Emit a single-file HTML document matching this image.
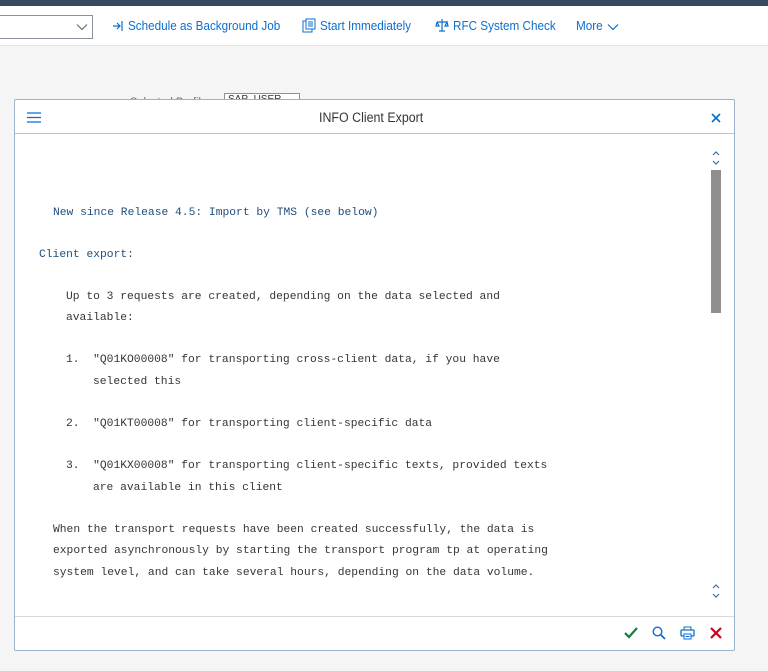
<!DOCTYPE html>
<html><head><meta charset="utf-8"><style>
*{margin:0;padding:0;box-sizing:border-box}
body{width:768px;height:671px;overflow:hidden;background:#f5f5f5;font-family:"Liberation Sans",sans-serif;position:relative}
.top{position:absolute;left:0;top:0;width:768px;height:6px;background:#354a5f}
.tb{position:absolute;left:0;top:6px;width:768px;height:40px;background:#fff;border-bottom:1px solid #e5e5e5}
.sel{position:absolute;left:-2px;top:9px;width:95px;height:24px;border:1px solid #89919a;background:#fff}
.tb a,.tb svg.i{position:absolute;}
.tb a{top:12px;font-size:13px;color:#0a6ed1;text-decoration:none;white-space:nowrap;transform:scaleX(0.9);transform-origin:left}
.bg1{position:absolute;left:130px;top:96px;font-size:11px;color:#6a6d70}
.fld{position:absolute;left:224px;top:93px;width:76px;height:14px;border:1px solid #89919a;background:#fff;font-size:10px;color:#333;padding-left:3px}
.dlg{position:absolute;left:14px;top:99px;width:721px;height:552px;background:#fff;border:1px solid #9bb3cd;border-radius:2px}
.hd{position:absolute;left:0;top:0;width:100%;height:34px;border-bottom:1px solid #b3c7dc;line-height:34px;font-size:13.5px;color:#32363a}
.ttl{position:absolute;left:304px;top:1px;transform:scaleX(0.92);transform-origin:left;white-space:nowrap}
.ft{position:absolute;left:0;top:516px;width:100%;height:35px;border-top:1px solid #d9d9d9}
.l{position:absolute;font-family:"Liberation Mono",monospace;font-size:11.3px;color:#32363a;white-space:pre;line-height:14px}
.b{color:#1f4e7d}
.sb{position:absolute;left:696px;top:70px;width:10px;height:143px;background:#8f8f8f}
</style></head><body>
<div class="top"></div>
<div class="tb">
<div class="sel"><svg style="position:absolute;right:4px;top:7px" width="12" height="8"><path d="M1 1.5 6 6.5 11 1.5" stroke="#6a6d70" fill="none" stroke-width="1.2"/></svg></div>
<svg class="i" style="left:112px;top:14px" width="12" height="12"><path d="M1 6H8M5 3 8 6 5 9M10 1V11" stroke="#0a6ed1" fill="none" stroke-width="1.2"/></svg>
<a style="left:128px">Schedule as Background Job</a>
<svg class="i" style="left:302px;top:12px" width="14" height="15"><rect x="1" y="3" width="9" height="11" stroke="#0a6ed1" fill="none"/><rect x="4" y="1" width="9" height="10" stroke="#0a6ed1" fill="#fff"/><path d="M6 4h5M6 6h5M6 8h5" stroke="#0a6ed1"/></svg>
<a style="left:320px">Start Immediately</a>
<svg class="i" style="left:435px;top:12px" width="14" height="14"><path d="M7 1V13M2 4H12M4 13H10M2 4 1 8H4L2 4M12 4 10 8H13Z" stroke="#0a6ed1" fill="none" stroke-width="1.2"/></svg>
<a style="left:453px">RFC System Check</a>
<a style="left:576px">More</a>
<svg class="i" style="left:607px;top:17px" width="12" height="8"><path d="M1 1.5 6 6.5 11 1.5" stroke="#0a6ed1" fill="none" stroke-width="1.2"/></svg>
</div>
<div class="bg1">Selected Profile</div>
<div class="fld">SAP_USER</div>
<div class="dlg">
<div class="hd"><span class="ttl">INFO Client Export</span>
<svg style="position:absolute;left:12px;top:12px" width="14" height="11"><path d="M0 1H14M0 5.5H14M0 10H14" stroke="#0a6ed1" stroke-width="1.3"/></svg>
<svg style="position:absolute;right:13px;top:13px" width="10" height="10"><path d="M1 1 9 9M9 1 1 9" stroke="#0a6ed1" stroke-width="1.6"/></svg>
</div>
<svg style="position:absolute;left:696px;top:50px" width="10" height="16"><path d="M2 5 5 2 8 5M2 11 5 14 8 11" stroke="#3b6ea5" fill="none" stroke-width="1.2"/></svg>
<div class="sb"></div>
<svg style="position:absolute;left:696px;top:483px" width="10" height="16"><path d="M2 5 5 2 8 5M2 11 5 14 8 11" stroke="#3b6ea5" fill="none" stroke-width="1.2"/></svg>
<div class="l b" style="left:38px;top:106px">New since Release 4.5: Import by TMS (see below)</div>
<div class="l b" style="left:24px;top:148px">Client export:</div>
<div class="l" style="left:51px;top:190px">Up to 3 requests are created, depending on the data selected and</div>
<div class="l" style="left:51px;top:211px">available:</div>
<div class="l" style="left:51px;top:253px">1.  "Q01KO00008" for transporting cross-client data, if you have</div>
<div class="l" style="left:78px;top:275px">selected this</div>
<div class="l" style="left:51px;top:317px">2.  "Q01KT00008" for transporting client-specific data</div>
<div class="l" style="left:51px;top:359px">3.  "Q01KX00008" for transporting client-specific texts, provided texts</div>
<div class="l" style="left:78px;top:381px">are available in this client</div>
<div class="l" style="left:38px;top:423px">When the transport requests have been created successfully, the data is</div>
<div class="l" style="left:38px;top:444px">exported asynchronously by starting the transport program tp at operating</div>
<div class="l" style="left:38px;top:466px">system level, and can take several hours, depending on the data volume.</div>
<div class="ft">
<svg style="position:absolute;left:609px;top:10px" width="14" height="12"><path d="M1 6 5 10 13 1" stroke="#107e3e" fill="none" stroke-width="2.2"/></svg>
<svg style="position:absolute;left:637px;top:9px" width="14" height="14"><circle cx="5.5" cy="5.5" r="4.3" stroke="#0a6ed1" fill="none" stroke-width="1.4"/><path d="M8.5 8.5 13 13" stroke="#0a6ed1" stroke-width="1.8"/></svg>
<svg style="position:absolute;left:665px;top:9px" width="15" height="14"><rect x="4" y="1" width="7" height="3" stroke="#0a6ed1" fill="none"/><rect x="1" y="4" width="13" height="6" rx="1" stroke="#0a6ed1" fill="none" stroke-width="1.3"/><rect x="4" y="8" width="7" height="5" stroke="#0a6ed1" fill="#fff"/><path d="M5.5 10.5h4" stroke="#0a6ed1"/></svg>
<svg style="position:absolute;left:695px;top:10px" width="12" height="12"><path d="M1 1 11 11M11 1 1 11" stroke="#d0021b" stroke-width="2.2"/></svg>
</div>
</div>
</body></html>
